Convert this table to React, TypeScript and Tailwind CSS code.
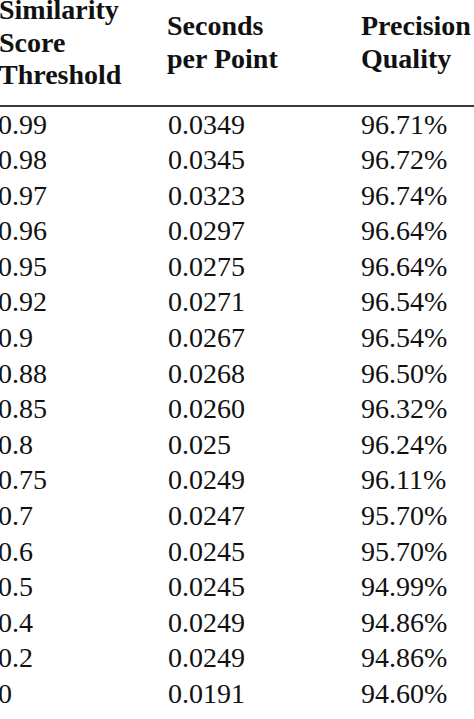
const rows = [
  ["0.99", "0.0349", "96.71%"],
  ["0.98", "0.0345", "96.72%"],
  ["0.97", "0.0323", "96.74%"],
  ["0.96", "0.0297", "96.64%"],
  ["0.95", "0.0275", "96.64%"],
  ["0.92", "0.0271", "96.54%"],
  ["0.9", "0.0267", "96.54%"],
  ["0.88", "0.0268", "96.50%"],
  ["0.85", "0.0260", "96.32%"],
  ["0.8", "0.025", "96.24%"],
  ["0.75", "0.0249", "96.11%"],
  ["0.7", "0.0247", "95.70%"],
  ["0.6", "0.0245", "95.70%"],
  ["0.5", "0.0245", "94.99%"],
  ["0.4", "0.0249", "94.86%"],
  ["0.2", "0.0249", "94.86%"],
  ["0", "0.0191", "94.60%"],
];

const App = () => {
  return (
    <div
      className="w-[474px] h-[719px] overflow-hidden bg-white text-[#111]"
      style={{ fontFamily: '"Liberation Serif", "Times New Roman", serif' }}
    >
      <div className="-ml-[2px] -mt-[6px]">
        {/* header */}
        <div className="grid grid-cols-[170px_193px_1fr] items-center text-[28px] leading-[32.5px] font-bold pb-[13px]">
          <div className="pl-[1px]">
            Similarity
            <br />
            Score
            <br />
            Threshold
          </div>
          <div className="-ml-[1px]">
            Seconds
            <br />
            per Point
          </div>
          <div>
            Precision
            <br />
            Quality
          </div>
        </div>
        <div className="h-[2px] bg-[#3a3a3a] ml-[2px]" />
        {/* body */}
        <div className="text-[28px] leading-[35.6px]">
          {rows.map((row, i) => (
            <div key={i} className="grid grid-cols-[170px_193px_1fr]">
              <div>{row[0]}</div>
              <div>{row[1]}</div>
              <div>{row[2]}</div>
            </div>
          ))}
        </div>
      </div>
    </div>
  );
};

export default App;
